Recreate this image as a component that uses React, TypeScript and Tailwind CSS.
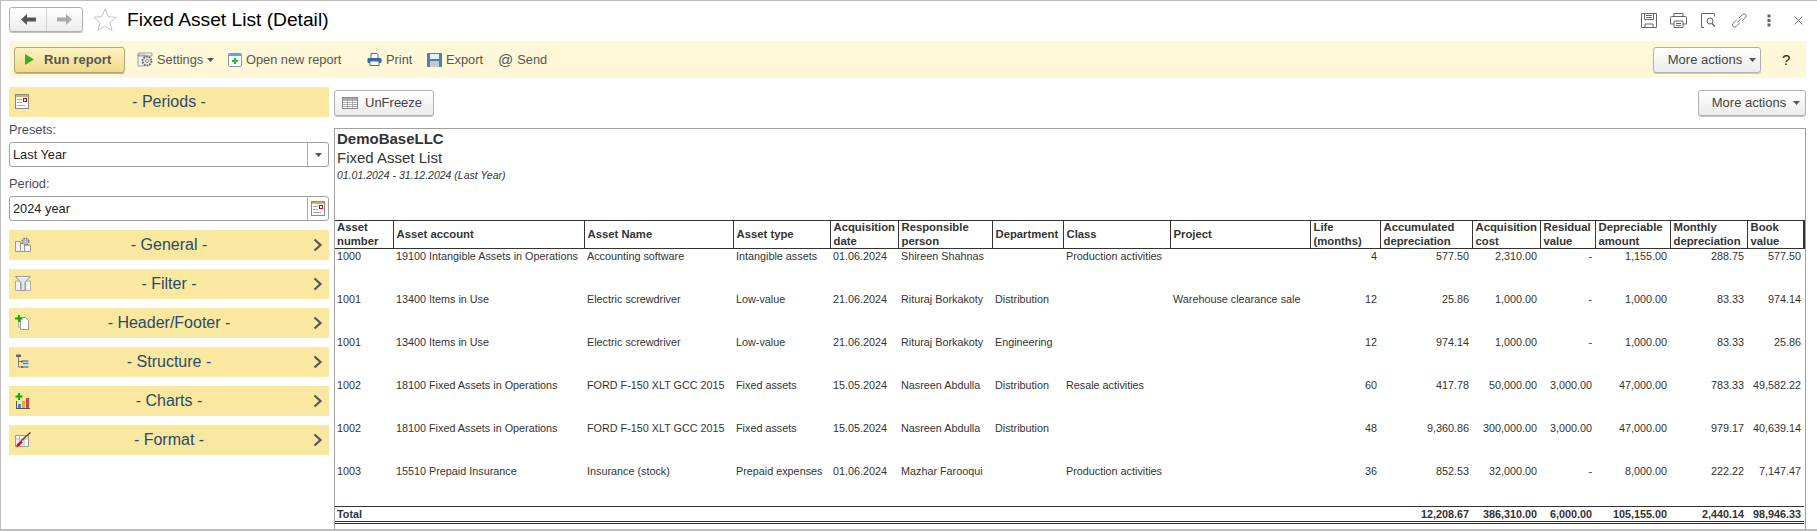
import type { ReactNode } from "react";

const font = "font-['Liberation_Sans',Arial,sans-serif]";

const Caret = ({ className = "" }: { className?: string }) => (
  <svg width="7" height="4" viewBox="0 0 7 4" className={className}>
    <path d="M0 0h7L3.5 4z" fill="#555" />
  </svg>
);

const CalendarIcon = () => (
  <svg width="14" height="15" viewBox="0 0 14 15">
    <rect x="0.5" y="0.5" width="13" height="14" fill="#fff" stroke="#888" />
    <rect x="1" y="1" width="12" height="2" fill="#c9b36a" />
    <path d="M2 5.5h5M2 8.5h5M2 11.5h8" stroke="#aaa" />
    <rect x="8.5" y="4.5" width="3" height="3" fill="#fff" stroke="#e00000" />
  </svg>
);

const BlocksGear = () => (
  <svg width="16" height="15" viewBox="0 0 16 15">
    <path d="M.5 4.500h5v10h-5zM5.500 6.500h4v8h-4zM9.500 8h6v6.500h-6z" fill="#f3f3f3" stroke="#999" />
    <circle cx="10.500" cy="4.500" r="3.200" fill="#ddd" stroke="#777" strokeWidth="1.800" strokeDasharray="1.600 0.900" />
    <circle cx="10.500" cy="4.500" r="1.200" fill="#fff" stroke="#666" strokeWidth="0.600" />
  </svg>
);

const BlocksFunnel = () => (
  <svg width="16" height="15" viewBox="0 0 16 15">
    <path d="M.5 5h5v9.500h-5zM10.500 5h5v9.500h-5z" fill="#f3f3f3" stroke="#aaa" />
    <path d="M.5.500h15l-5.500 6v8H6v-8z" fill="#e4e4e4" stroke="#999" />
    <path d="M3 1.500h10" stroke="#fff" />
  </svg>
);

const HeaderIcon = () => (
  <svg width="15" height="15" viewBox="0 0 15 15">
    <path d="M5.500 2.500h5l3 3v9h-8z" fill="#fff" stroke="#999" />
    <path d="M3.500 6.500v6h2" fill="none" stroke="#bbb" />
    <path d="M4 0v7M0 3.500h7.500" stroke="#00b400" strokeWidth="2" />
  </svg>
);

const StructureIcon = () => (
  <svg width="14" height="15" viewBox="0 0 14 15">
    <path d="M1 .500h5v2.500H1z" fill="#666" />
    <path d="M3.500 3v10h3M3.500 7.500h3" fill="none" stroke="#777" />
    <path d="M6 6.500h2v2H6zM6 12h2v2H6z" fill="#666" />
    <path d="M8 7h5.500M8 9.500h5.500M8 13h5.500" stroke="#4a8ac8" strokeWidth="1.500" />
  </svg>
);

const ChartsIcon = () => (
  <svg width="16" height="16" viewBox="0 0 16 16">
    <path d="M1 15.500h14" stroke="#555" />
    <path d="M1 8h1v7H1z" fill="#555" />
    <path d="M3 11h3v4H3z" fill="#4a8ac8" />
    <path d="M7 8h3v7H7z" fill="#d4b13f" />
    <path d="M11 5h3v10h-3z" fill="#dd4040" />
    <path d="M4 0v7M0.500 3.500h7" stroke="#00b400" strokeWidth="2" />
  </svg>
);

const FormatIcon = () => (
  <svg width="16" height="16" viewBox="0 0 16 16">
    <path d="M0.500 3.500h13v11H0.500z" fill="#f4f4f4" stroke="#999" />
    <path d="M4.500 3.500v11M9 3.500v11M0.500 7h13" stroke="#bbb" />
    <path d="M15.500 0.500 6 9" stroke="#6a4326" strokeWidth="1.500" />
    <path d="M6.500 8.500 2 12l-1 3 3-1 3.500-3.500z" fill="#f00000" />
  </svg>
);

const GridIcon = () => (
  <svg width="16" height="12" viewBox="0 0 16 12">
    <rect x="0.500" y="0.500" width="15" height="11" fill="#fff" stroke="#8a8a8a" />
    <rect x="1" y="1" width="14" height="2" fill="#aaa" />
    <path d="M1 3.500h14M1 5.500h14M1 7.500h14M1 9.500h14M5.500 1v10M10.500 1v10" stroke="#999" strokeWidth="0.800" />
  </svg>
);

const SectionBar = ({ icon, title, open }: { icon: ReactNode; title: string; open?: boolean }) => (
  <div className="relative flex h-[30px] items-center justify-center bg-[#fbe8a0] text-[16px] text-[#2a4a68]">
    <span className="absolute left-[6px] top-[7px] flex">{icon}</span>
    <span>- {title} -</span>
    {!open && (
      <svg width="10" height="14" viewBox="0 0 10 14" className="absolute right-[6px] top-[8px]">
        <path d="M1.500 1.500 7.500 7l-6 5.500" fill="none" stroke="#555" strokeWidth="2.200" />
      </svg>
    )}
  </div>
);

const Field = ({ label, value, right }: { label: string; value: string; right: ReactNode }) => (
  <div>
    <div className="h-[25px] pt-[5px] text-[12.8px] leading-[16px] text-[#4a4a5c]">{label}</div>
    <div className="flex h-[25px] items-center rounded-[3px] border border-[#a0a0a0] bg-white">
      <span className="flex-1 pl-[3px] text-[12.8px] text-[#222]">{value}</span>
      <span className="flex h-full w-[21px] items-center justify-center border-l border-[#a8a8a8]">{right}</span>
    </div>
  </div>
);

const GrayButton = ({ className, children }: { className: string; children: ReactNode }) => (
  <div
    className={`flex h-[26px] items-center rounded-[3px] border border-[#b0b0b0] bg-gradient-to-b from-white to-[#ebebeb] text-[13px] text-[#444] shadow-[0_1px_0_#c8c8c8] ${className}`}
  >
    {children}
  </div>
);

const ToolItem = ({ className, icon, label }: { className: string; icon: ReactNode; label: ReactNode }) => (
  <div className={`flex items-center gap-[4px] text-[12.8px] text-[#555] ${className}`}>
    {icon}
    {label}
  </div>
);

const columns = [
  "w-[58px]", "w-[191px]", "w-[149px]", "w-[97px]", "w-[68px]", "w-[94px]", "w-[71px]", "w-[107px]",
  "w-[140px]", "w-[70px]", "w-[92px]", "w-[68px]", "w-[55px]", "w-[75px]", "w-[77px]", "w-[57px]",
];

const headers: ReactNode[] = [
  <>Asset<br />number</>, "Asset account", "Asset Name", "Asset type", <>Acquisition<br />date</>,
  <>Responsible<br />person</>, "Department", "Class", "Project", <>Life<br />(months)</>,
  <>Accumulated<br />depreciation</>, <>Acquisition<br />cost</>, <>Residual<br />value</>,
  <>Depreciable<br />amount</>, <>Monthly<br />depreciation</>, <>Book<br />value</>,
];

const rows = [
  ["1000", "19100 Intangible Assets in Operations", "Accounting software", "Intangible assets", "01.06.2024", "Shireen Shahnas", "", "Production activities", "", "4", "577.50", "2,310.00", "-", "1,155.00", "288.75", "577.50"],
  ["1001", "13400 Items in Use", "Electric screwdriver", "Low-value", "21.06.2024", "Rituraj Borkakoty", "Distribution", "", "Warehouse clearance sale", "12", "25.86", "1,000.00", "-", "1,000.00", "83.33", "974.14"],
  ["1001", "13400 Items in Use", "Electric screwdriver", "Low-value", "21.06.2024", "Rituraj Borkakoty", "Engineering", "", "", "12", "974.14", "1,000.00", "-", "1,000.00", "83.33", "25.86"],
  ["1002", "18100 Fixed Assets in Operations", "FORD F-150 XLT GCC 2015", "Fixed assets", "15.05.2024", "Nasreen Abdulla", "Distribution", "Resale activities", "", "60", "417.78", "50,000.00", "3,000.00", "47,000.00", "783.33", "49,582.22"],
  ["1002", "18100 Fixed Assets in Operations", "FORD F-150 XLT GCC 2015", "Fixed assets", "15.05.2024", "Nasreen Abdulla", "Distribution", "", "", "48", "9,360.86", "300,000.00", "3,000.00", "47,000.00", "979.17", "40,639.14"],
  ["1003", "15510 Prepaid Insurance", "Insurance (stock)", "Prepaid expenses", "01.06.2024", "Mazhar Farooqui", "", "Production activities", "", "36", "852.53", "32,000.00", "-", "8,000.00", "222.22", "7,147.47"],
];

const totals = ["12,208.67", "386,310.00", "6,000.00", "105,155.00", "2,440.14", "98,946.33"];

const App = () => {
  return (
    <div className={`${font} relative h-[531px] w-[1817px] overflow-hidden border-b-2 border-l border-t border-[#bdbdbd] bg-white pl-[8px] pt-[6px]`}>
      {/* Title row */}
      <div className="flex h-[34px] items-start pr-[8px]">
        <div className="flex h-[25px] w-[74px] rounded-[3px] border border-[#b0b0b0] bg-gradient-to-b from-white to-[#ececec] shadow-[0_1px_0_#c0c0c0]">
          <span className="flex w-[37px] items-center justify-center border-r border-[#d0d0d0]">
            <svg width="15" height="11" viewBox="0 0 15 11">
              <path d="M6 0 0 5.500 6 11V7.500h9v-4H6z" fill="#555" />
            </svg>
          </span>
          <span className="flex flex-1 items-center justify-center">
            <svg width="15" height="11" viewBox="0 0 15 11">
              <path d="M9 0l6 5.500L9 11V7.500H0v-4h9z" fill="#aaa" />
            </svg>
          </span>
        </div>
        <svg width="24" height="23" viewBox="0 0 24 23" className="ml-[10px] mt-[1px]">
          <path d="M12 1l3.200 7.600 8 .7-6.100 5.300 1.900 8-7-4.300-7 4.300 1.900-8L.8 9.300l8-.7z" fill="#fff" stroke="#c4c4c4" />
        </svg>
        <div className="ml-[10px] text-[19.2px] leading-[26px] text-black">Fixed Asset List (Detail)</div>
        <div className="ml-auto mr-[6px] mt-[5px] flex h-[16px] items-center">
          <svg width="16" height="15" viewBox="0 0 16 15" fill="none" stroke="#666" className="mr-[13px]">
            <path d="M.5.5h15v14H.5z" />
            <path d="M3.500.5v6h9v-6M4 11h8v3.500H4z" />
            <path d="M5 2.500h6M5 4.500h6" />
          </svg>
          <svg width="17" height="15" viewBox="0 0 17 15" fill="none" stroke="#666" className="mr-[14px]">
            <path d="M4 4V.5h9V4M4 11H.5V4.500a1 1 0 0 1 1-1h14a1 1 0 0 1 1 1V11H13" />
            <path d="M4 8h9v6.500H4zM6 10.500h5M6 12.500h5" />
          </svg>
          <svg width="16" height="15" viewBox="0 0 16 15" fill="none" stroke="#666" className="mr-[14px]">
            <path d="M3 14.500H.5V.5h13v3" />
            <circle cx="9" cy="8" r="3" />
            <path d="M11 10.500l3 3" strokeWidth="1.500" />
          </svg>
          <svg width="16" height="15" viewBox="0 0 16 15" fill="none" stroke="#777" className="mr-[20px]">
            <path d="M6.500 9.500 10.500 5M5.500 7 2 10.500a2.100 2.100 0 0 0 3 3L8.500 10M8 5l3.500-3.500a2.100 2.100 0 0 1 3 3L11 8" />
          </svg>
          <svg width="4" height="13" viewBox="0 0 4 13" className="mr-[23px]">
            <path d="M.5.500h3v3h-3zM.5 5h3v3h-3zM.5 9.500h3v3h-3z" fill="#666" />
          </svg>
          <svg width="9" height="9" viewBox="0 0 9 9">
            <path d="M.5.500l8 8M8.500.500l-8 8" stroke="#777" />
          </svg>
        </div>
      </div>

      {/* Command bar */}
      <div className="flex h-[37px] w-[1797px] items-center bg-[#fff8d8] pl-[5px]">
        <div className="flex h-[26px] w-[111px] items-center rounded-[3px] border border-[#b3a77a] bg-gradient-to-b from-[#fdf3c4] to-[#eeda86] pl-[10px] shadow-[0_1px_0_#c4b98c]">
          <svg width="9" height="11" viewBox="0 0 9 11">
            <path d="M0 0l9 5.500L0 11z" fill="#3fae1e" />
          </svg>
          <span className="ml-[10px] text-[13px] font-bold tracking-[0.1px] text-[#555]">Run report</span>
        </div>
        <ToolItem
          className="ml-[12px] w-[91px]"
          icon={
            <svg width="16" height="15" viewBox="0 0 16 15">
              <path d="M1 3h7v11H1zM1 1h14v3H1z" fill="#f2f2f2" stroke="#888" strokeWidth="0.800" />
              <circle cx="10" cy="9" r="4.500" fill="#e4e4e4" stroke="#666" strokeWidth="1.800" strokeDasharray="1.800 1" />
              <circle cx="10" cy="9" r="1.500" fill="#fff" stroke="#666" strokeWidth="0.700" />
            </svg>
          }
          label={<span className="flex items-center gap-[4px]">Settings <Caret /></span>}
        />
        <ToolItem
          className="w-[139px]"
          icon={
            <svg width="14" height="14" viewBox="0 0 14 14">
              <rect x="0.500" y="0.500" width="13" height="13" rx="1" fill="#fff" stroke="#7f95aa" />
              <rect x="1" y="1" width="12" height="2" fill="#58a6e8" />
              <path d="M7 5v6M4 8h6" stroke="#2eb82e" strokeWidth="2" />
            </svg>
          }
          label="Open new report"
        />
        <ToolItem
          className="w-[60px]"
          icon={
            <svg width="15" height="13" viewBox="0 0 15 13">
              <path d="M4 5V.500h6L11 2v3" fill="#fff" stroke="#667" />
              <rect x="0.500" y="5" width="14" height="5" rx="1" fill="#2f6ca8" />
              <rect x="3" y="8" width="9" height="4.500" fill="#fff" stroke="#667" />
            </svg>
          }
          label="Print"
        />
        <ToolItem
          className="w-[71px]"
          icon={
            <svg width="15" height="14" viewBox="0 0 15 14">
              <rect width="15" height="14" rx="1" fill="#4d7fb5" />
              <rect x="3" y="1" width="9" height="5" fill="#e8f0f8" />
              <rect x="3" y="8" width="9" height="6" fill="#c8c8c8" />
            </svg>
          }
          label="Export"
        />
        <ToolItem className="" icon={<span className="text-[15px] leading-none text-[#555]">@</span>} label="Send" />
        <GrayButton className="ml-auto mr-[45px] w-[108px] justify-center gap-[7px] pl-[10px]">
          More actions <Caret />
        </GrayButton>
      </div>

      {/* Body */}
      <div className="mt-[9px] flex">
        <div className="w-[320px]">
          <SectionBar icon={<CalendarIcon />} title="Periods" open />
          <Field label="Presets:" value="Last Year" right={<Caret />} />
          <div className="h-[4px]" />
          <Field label="Period:" value="2024 year" right={<CalendarIcon />} />
          <div className="mt-[9px] flex flex-col gap-[9px]">
            <SectionBar icon={<BlocksGear />} title="General" />
            <SectionBar icon={<BlocksFunnel />} title="Filter" />
            <SectionBar icon={<HeaderIcon />} title="Header/Footer" />
            <SectionBar icon={<StructureIcon />} title="Structure" />
            <SectionBar icon={<ChartsIcon />} title="Charts" />
            <SectionBar icon={<FormatIcon />} title="Format" />
          </div>
        </div>

        <div className="ml-[5px] w-[1472px]">
          <div className="mt-[3px] flex h-[26px] justify-between">
            <GrayButton className="w-[100px] gap-[7px] pl-[7px]">
              <GridIcon /> UnFreeze
            </GrayButton>
            <GrayButton className="w-[108px] justify-center gap-[7px] pl-[8px]">
              More actions <Caret />
            </GrayButton>
          </div>

          <div className="mt-[12px] h-[401px] border-l border-r border-t border-[#a0a0a0]">
            <div className="h-[91px] pl-[2px] text-[#333]">
              <div className="text-[15px] font-bold leading-[19px]">DemoBaseLLC</div>
              <div className="text-[15px] leading-[20px]">Fixed Asset List</div>
              <div className="text-[10.5px] italic leading-[14px]">01.01.2024 - 31.12.2024 (Last Year)</div>
            </div>
            <table className="w-[1469px] table-fixed border-collapse text-[10.8px] leading-[14px] text-[#333]">
              <colgroup>
                {columns.map((w, i) => (
                  <col key={i} className={w} />
                ))}
              </colgroup>
              <thead>
                <tr className="h-[27px] border-b border-t border-[#333]">
                  {headers.map((h, i) => (
                    <th
                      key={i}
                      className={`border-r border-[#333] text-left align-middle text-[11.3px] font-bold leading-[13.5px] last:border-r-2 ${i === 0 ? "pl-[2px]" : "pl-[3px]"}`}
                    >
                      {h}
                    </th>
                  ))}
                </tr>
              </thead>
              <tbody>
                {rows.map((row, r) => (
                  <tr key={r} className="h-[43px]">
                    {row.map((cell, i) => (
                      <td
                        key={i}
                        className={`whitespace-nowrap align-top ${i >= 9 ? "pr-[3px] text-right" : i === 0 ? "pl-[2px]" : "pl-[3px]"}`}
                      >
                        {cell}
                      </td>
                    ))}
                  </tr>
                ))}
                <tr className="h-[14px] border-t border-[#333] font-bold">
                  <td colSpan={10} className="pl-[2px]">Total</td>
                  {totals.map((t, i) => (
                    <td key={i} className="whitespace-nowrap pr-[3px] text-right">{t}</td>
                  ))}
                </tr>
              </tbody>
            </table>
            <div className="h-[3px] w-[1469px] border-b border-t border-[#333]" />
          </div>
        </div>
      </div>

      {/* Help mark over the command bar */}
      <span className="absolute left-[1781px] top-[50px] text-[15px] leading-[18px] text-[#222]">?</span>
    </div>
  );
};

export default App;
